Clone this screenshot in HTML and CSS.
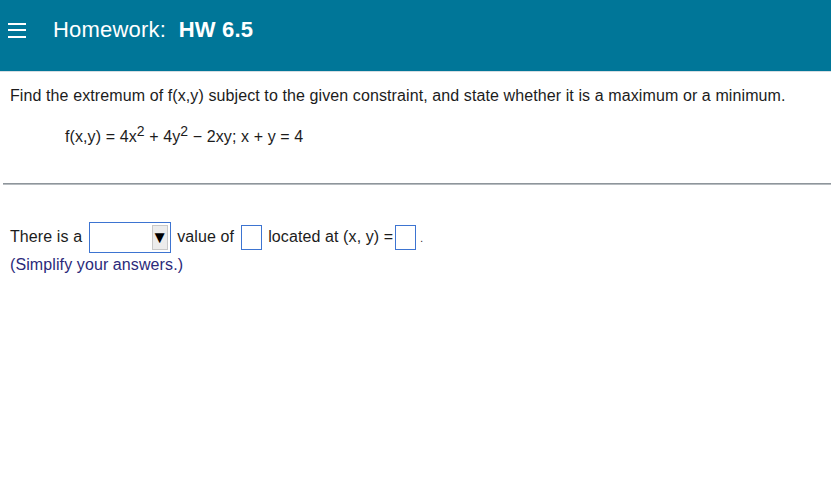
FILE: index.html
```html
<!DOCTYPE html>
<html lang="en">
<head>
    <meta charset="UTF-8">
    <title>Homework: HW 6.5</title>
    <link rel="stylesheet" href="styles.css">
</head>
<body>
    <header class="topbar">
        <span class="menu-icon">
            <svg width="18" height="16" viewBox="0 0 18 16">
                <rect x="0" y="1" width="18" height="2" fill="#fff"/>
                <rect x="0" y="7" width="18" height="2" fill="#fff"/>
                <rect x="0" y="14" width="18" height="2" fill="#fff"/>
            </svg>
        </span>
        <h1 class="title">Homework:&nbsp; <b>HW 6.5</b></h1>
    </header>

    <main class="question">
        <p class="prompt">Find the extremum of f(x,y) subject to the given constraint, and state whether it is a maximum or a minimum.</p>
        <p class="formula">f(x,y) = 4x<sup>2</sup> + 4y<sup>2</sup> &minus; 2xy; x + y = 4</p>
    </main>

    <hr class="divider">

    <section class="answer">
        <div class="answer-line">There is a <span class="dropdown"><span class="dropdown-btn">&#9660;</span></span> value of <span class="blank"></span> located at (x, y) =<span class="blank"></span><span class="dot">.</span></div>
        <div class="hint">(Simplify your answers.)</div>
    </section>
</body>
</html>
```

FILE: styles.css
```css
body {
    margin: 0;
    font-family: "Liberation Sans", Arial, sans-serif;
    font-size: 16px;
    letter-spacing: 0.1px;
    color: #1c1c1c;
    background: #fff;
}
.topbar {
    height: 72px;
    background-color: #007698;
    border-bottom: 1px solid #d6dde2;
    display: flex;
    align-items: flex-start;
    padding-top: 17px;
    box-sizing: border-box;
    color: #fff;
}
.menu-icon {
    margin-left: 8px;
    margin-top: 5px;
    width: 18px;
    height: 16px;
}
.menu-icon svg {
    display: block;
}
.title {
    margin: 0 0 0 27px;
    font-size: 22px;
    font-weight: normal;
    letter-spacing: 0.2px;
}
.title b {
    font-weight: bold;
}
.question {
    padding: 0 10px;
}
.prompt {
    margin: 15px 0 0 0;
}
.formula {
    margin: 23px 0 0 55px;
}
.formula sup {
    font-size: 14px;
    line-height: 0;
}
.divider {
    margin: 37px 0 0 3px;
    border: none;
    border-top: 1px solid #8e959b;
    border-bottom: 1px solid #b7bcc0;
}
.answer {
    padding: 35px 10px 0 10px;
}
.answer-line {
    line-height: 33px;
}
.dropdown {
    display: inline-flex;
    justify-content: flex-end;
    align-items: center;
    width: 82px;
    height: 31px;
    box-sizing: border-box;
    border: 1px solid #3d74d1;
    margin: 0 2px;
    padding-right: 2px;
    vertical-align: middle;
}
.dropdown-btn {
    width: 16px;
    height: 25px;
    box-sizing: border-box;
    background: #ececec;
    border: 1px solid #c8c8c8;
    font-size: 17px;
    color: #000;
    display: flex;
    align-items: center;
    justify-content: center;
}
.blank {
    display: inline-block;
    width: 21px;
    height: 25px;
    box-sizing: border-box;
    border: 1px solid #3d74d1;
    margin: 0 2px;
    vertical-align: middle;
}
.dot {
    font-size: 10px;
    margin-left: 2px;
}
.hint {
    margin-top: 1px;
    color: #2b2a7a;
}
```
